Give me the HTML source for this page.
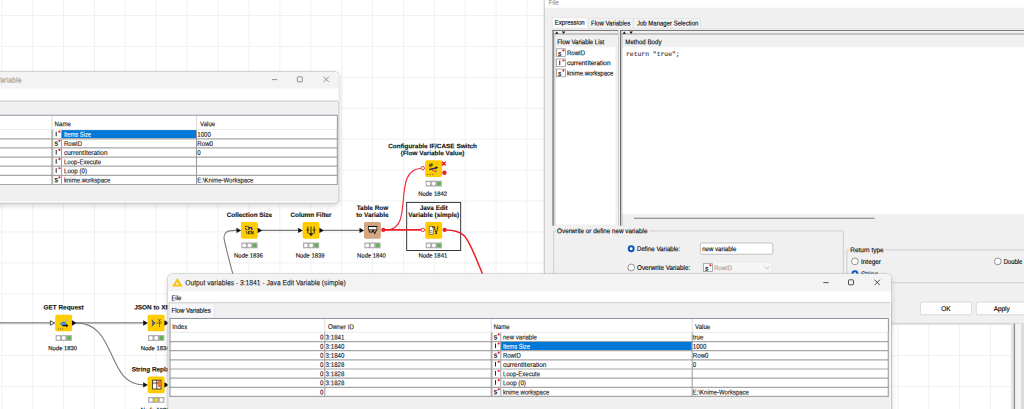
<!DOCTYPE html>
<html><head><meta charset="utf-8"><title>KNIME</title>
<style>html,body{margin:0;padding:0;background:#fff;overflow:hidden}svg{display:block;font-family:"Liberation Sans",sans-serif}</style>
</head><body>
<svg width="1024" height="409" viewBox="0 0 1024 409">
<defs>
<filter id="sh" x="-5%" y="-10%" width="110%" height="125%"><feGaussianBlur in="SourceAlpha" stdDeviation="2.5"/><feOffset dy="1.5"/><feComponentTransfer><feFuncA type="linear" slope="0.16"/></feComponentTransfer><feMerge><feMergeNode/><feMergeNode in="SourceGraphic"/></feMerge></filter>
<clipPath id="cw1"><rect x="-10" y="71.7" width="348.8" height="131.6" rx="4"/></clipPath>
<clipPath id="cw3"><rect x="167.9" y="273.9" width="723.4" height="150" rx="4"/></clipPath>
</defs>

<rect x="0.00" y="0.00" width="1024.00" height="409.00" fill="#fff"/>
<line x1="1.76" y1="0.00" x2="1.76" y2="409.00" stroke="#f1f1f1" stroke-width="1"/>
<line x1="32.66" y1="0.00" x2="32.66" y2="409.00" stroke="#f1f1f1" stroke-width="1"/>
<line x1="63.56" y1="0.00" x2="63.56" y2="409.00" stroke="#f1f1f1" stroke-width="1"/>
<line x1="94.46" y1="0.00" x2="94.46" y2="409.00" stroke="#f1f1f1" stroke-width="1"/>
<line x1="125.36" y1="0.00" x2="125.36" y2="409.00" stroke="#f1f1f1" stroke-width="1"/>
<line x1="156.26" y1="0.00" x2="156.26" y2="409.00" stroke="#f1f1f1" stroke-width="1"/>
<line x1="187.16" y1="0.00" x2="187.16" y2="409.00" stroke="#f1f1f1" stroke-width="1"/>
<line x1="218.06" y1="0.00" x2="218.06" y2="409.00" stroke="#f1f1f1" stroke-width="1"/>
<line x1="248.96" y1="0.00" x2="248.96" y2="409.00" stroke="#f1f1f1" stroke-width="1"/>
<line x1="279.86" y1="0.00" x2="279.86" y2="409.00" stroke="#f1f1f1" stroke-width="1"/>
<line x1="310.76" y1="0.00" x2="310.76" y2="409.00" stroke="#f1f1f1" stroke-width="1"/>
<line x1="341.66" y1="0.00" x2="341.66" y2="409.00" stroke="#f1f1f1" stroke-width="1"/>
<line x1="372.56" y1="0.00" x2="372.56" y2="409.00" stroke="#f1f1f1" stroke-width="1"/>
<line x1="403.46" y1="0.00" x2="403.46" y2="409.00" stroke="#f1f1f1" stroke-width="1"/>
<line x1="434.36" y1="0.00" x2="434.36" y2="409.00" stroke="#f1f1f1" stroke-width="1"/>
<line x1="465.26" y1="0.00" x2="465.26" y2="409.00" stroke="#f1f1f1" stroke-width="1"/>
<line x1="496.16" y1="0.00" x2="496.16" y2="409.00" stroke="#f1f1f1" stroke-width="1"/>
<line x1="527.06" y1="0.00" x2="527.06" y2="409.00" stroke="#f1f1f1" stroke-width="1"/>
<line x1="557.96" y1="0.00" x2="557.96" y2="409.00" stroke="#f1f1f1" stroke-width="1"/>
<line x1="588.86" y1="0.00" x2="588.86" y2="409.00" stroke="#f1f1f1" stroke-width="1"/>
<line x1="619.76" y1="0.00" x2="619.76" y2="409.00" stroke="#f1f1f1" stroke-width="1"/>
<line x1="650.66" y1="0.00" x2="650.66" y2="409.00" stroke="#f1f1f1" stroke-width="1"/>
<line x1="681.56" y1="0.00" x2="681.56" y2="409.00" stroke="#f1f1f1" stroke-width="1"/>
<line x1="712.46" y1="0.00" x2="712.46" y2="409.00" stroke="#f1f1f1" stroke-width="1"/>
<line x1="743.36" y1="0.00" x2="743.36" y2="409.00" stroke="#f1f1f1" stroke-width="1"/>
<line x1="774.26" y1="0.00" x2="774.26" y2="409.00" stroke="#f1f1f1" stroke-width="1"/>
<line x1="805.16" y1="0.00" x2="805.16" y2="409.00" stroke="#f1f1f1" stroke-width="1"/>
<line x1="836.06" y1="0.00" x2="836.06" y2="409.00" stroke="#f1f1f1" stroke-width="1"/>
<line x1="866.96" y1="0.00" x2="866.96" y2="409.00" stroke="#f1f1f1" stroke-width="1"/>
<line x1="897.86" y1="0.00" x2="897.86" y2="409.00" stroke="#f1f1f1" stroke-width="1"/>
<line x1="928.76" y1="0.00" x2="928.76" y2="409.00" stroke="#f1f1f1" stroke-width="1"/>
<line x1="959.66" y1="0.00" x2="959.66" y2="409.00" stroke="#f1f1f1" stroke-width="1"/>
<line x1="990.56" y1="0.00" x2="990.56" y2="409.00" stroke="#f1f1f1" stroke-width="1"/>
<line x1="1021.46" y1="0.00" x2="1021.46" y2="409.00" stroke="#f1f1f1" stroke-width="1"/>
<line x1="0.00" y1="15.50" x2="1024.00" y2="15.50" stroke="#f1f1f1" stroke-width="1"/>
<line x1="0.00" y1="46.42" x2="1024.00" y2="46.42" stroke="#f1f1f1" stroke-width="1"/>
<line x1="0.00" y1="77.34" x2="1024.00" y2="77.34" stroke="#f1f1f1" stroke-width="1"/>
<line x1="0.00" y1="108.26" x2="1024.00" y2="108.26" stroke="#f1f1f1" stroke-width="1"/>
<line x1="0.00" y1="139.18" x2="1024.00" y2="139.18" stroke="#f1f1f1" stroke-width="1"/>
<line x1="0.00" y1="170.10" x2="1024.00" y2="170.10" stroke="#f1f1f1" stroke-width="1"/>
<line x1="0.00" y1="201.02" x2="1024.00" y2="201.02" stroke="#f1f1f1" stroke-width="1"/>
<line x1="0.00" y1="231.94" x2="1024.00" y2="231.94" stroke="#f1f1f1" stroke-width="1"/>
<line x1="0.00" y1="262.86" x2="1024.00" y2="262.86" stroke="#f1f1f1" stroke-width="1"/>
<line x1="0.00" y1="293.78" x2="1024.00" y2="293.78" stroke="#f1f1f1" stroke-width="1"/>
<line x1="0.00" y1="324.70" x2="1024.00" y2="324.70" stroke="#f1f1f1" stroke-width="1"/>
<line x1="0.00" y1="355.62" x2="1024.00" y2="355.62" stroke="#f1f1f1" stroke-width="1"/>
<line x1="0.00" y1="386.54" x2="1024.00" y2="386.54" stroke="#f1f1f1" stroke-width="1"/>
<line x1="0.00" y1="417.46" x2="1024.00" y2="417.46" stroke="#f1f1f1" stroke-width="1"/>
<line x1="0.00" y1="322.90" x2="50.00" y2="322.90" stroke="#7c7c7c" stroke-width="1.1"/>
<line x1="76.00" y1="322.90" x2="143.50" y2="322.90" stroke="#7c7c7c" stroke-width="1.1"/>
<path d="M76,322.9 C117.8,322.9 105.7,384.9 143.5,384.9" stroke="#7c7c7c" stroke-width="1.1" fill="none"/>
<path d="M237,230.4 C226,230 222.5,233 224.5,241 C227,252 230,264 233.5,276" stroke="#7c7c7c" stroke-width="1.1" fill="none"/>
<line x1="262.00" y1="230.40" x2="298.00" y2="230.40" stroke="#7c7c7c" stroke-width="1.1"/>
<line x1="323.50" y1="230.40" x2="360.00" y2="230.40" stroke="#7c7c7c" stroke-width="1.1"/>
<rect x="406.70" y="202.40" width="54.00" height="48.10" fill="#fff" stroke="#222" stroke-width="0.9"/>
<line x1="383.40" y1="229.95" x2="422.80" y2="229.95" stroke="#ec2027" stroke-width="1.7"/>
<path d="M383.4,229.9 H386.7 C415.8,229.9 390.1,168.2 422.5,168.2" stroke="#ec2027" stroke-width="1.1" fill="none"/>
<path d="M444.7,229.95 C469,229.95 466.8,238.1 486.7,283.7" stroke="#ec2027" stroke-width="1.5" fill="none"/>
<rect x="55.20" y="314.65" width="16.90" height="16.70" fill="#ffcc00" rx="1.7"/>
<text transform="translate(63.65,309.59) matrix(0.9850 0.0005 0 1 0 0)" font-size="6.5" fill="#111" font-weight="bold" text-anchor="middle" stroke="#111" stroke-width="0.12">GET Request</text>
<rect x="55.65" y="335.10" width="16.20" height="5.80" fill="#ababab"/>
<circle cx="58.45" cy="338.00" r="1.9" fill="#fff"/>
<circle cx="63.70" cy="338.00" r="1.9" fill="#fff"/>
<circle cx="68.95" cy="338.00" r="1.9" fill="#55b848"/>
<text transform="translate(62.75,350.20) matrix(0.9650 0.0005 0 1 0 0)" font-size="6.1" fill="#111" text-anchor="middle" stroke="#111" stroke-width="0.15">Node 1830</text>
<path d="M71.95,320.30 L76.65,323.00 L71.95,325.70 Z" fill="#111"/>
<path d="M50.35,320.80 L54.65,323.00 L50.35,325.20 Z" fill="#fff" stroke="#222" stroke-width="0.8"/>
<path d="M60.3,325.2 q-0.6,-2.4 1.8,-2.9 q1.2,-1.6 2.8,-0.5 q1.6,0.2 1.3,2 q0.6,1 -0.8,1.4 z" fill="#3d8fe0"/><path d="M62.4,325.6 h4.4" stroke="#0b0b1a" stroke-width="1.3" fill="none"/><path d="M66.1,323.7 l2.3,1.9 l-2.3,1.9 z" fill="#0b0b1a"/><path d="M66.5,318.9 l1.3,1.3 l-1.3,1.3 l-1.3,-1.3 z" fill="#9fbfa0"/>
<rect x="57.90" y="328.50" width="0.90" height="0.90" fill="#3a3a2a"/>
<rect x="60.00" y="328.50" width="0.90" height="0.90" fill="#3a3a2a"/>
<rect x="62.10" y="328.50" width="0.90" height="0.90" fill="#3a3a2a"/>
<rect x="147.65" y="314.65" width="16.90" height="16.70" fill="#ffcc00" rx="1.7"/>
<text transform="translate(154.50,309.59) matrix(0.9850 0.0005 0 1 0 0)" font-size="6.5" fill="#111" font-weight="bold" text-anchor="middle" stroke="#111" stroke-width="0.12">JSON to XML</text>
<rect x="148.10" y="335.10" width="16.20" height="5.80" fill="#ababab"/>
<circle cx="150.90" cy="338.00" r="1.9" fill="#fff"/>
<circle cx="156.15" cy="338.00" r="1.9" fill="#fff"/>
<circle cx="161.40" cy="338.00" r="1.9" fill="#55b848"/>
<text transform="translate(155.20,350.20) matrix(0.9650 0.0005 0 1 0 0)" font-size="6.1" fill="#111" text-anchor="middle" stroke="#111" stroke-width="0.15">Node 1834</text>
<path d="M143.20,320.30 L147.90,323.00 L143.20,325.70 Z" fill="#111"/>
<path d="M164.40,320.30 L169.10,323.00 L164.40,325.70 Z" fill="#111"/>
<path d="M151.9,319.9 l3.4,3.2 l-3.4,3.2 q1.6,-3.2 0,-6.4 z" fill="#4c5b80" stroke="#3a4666" stroke-width="0.5"/><path d="M158.5,319.3 l2,2.2 m0,-2.2 l-2,2.2" stroke="#222" stroke-width="0.8"/><path d="M159.5,321.8 v5.4" stroke="#222" stroke-width="0.9" stroke-dasharray="1.1 0.8"/><path d="M156.6,323 h5" stroke="#222" stroke-width="0.9" stroke-dasharray="1.1 0.8"/>
<rect x="147.65" y="376.55" width="16.90" height="16.70" fill="#ffcc00" rx="1.7"/>
<text transform="translate(155.30,371.49) matrix(0.9850 0.0005 0 1 0 0)" font-size="6.5" fill="#111" font-weight="bold" text-anchor="middle" stroke="#111" stroke-width="0.12">String Replacer</text>
<rect x="148.10" y="397.00" width="16.20" height="5.80" fill="#ababab"/>
<circle cx="150.90" cy="399.90" r="1.9" fill="#fff"/>
<circle cx="156.15" cy="399.90" r="1.9" fill="#f4d800"/>
<circle cx="161.40" cy="399.90" r="1.9" fill="#fff"/>
<text transform="translate(155.20,412.10) matrix(0.9650 0.0005 0 1 0 0)" font-size="6.1" fill="#111" text-anchor="middle" stroke="#111" stroke-width="0.15">Node 1931</text>
<path d="M143.20,382.20 L147.90,384.90 L143.20,387.60 Z" fill="#111"/>
<path d="M164.40,382.20 L169.10,384.90 L164.40,387.60 Z" fill="#111"/>
<rect x="152.60" y="380.20" width="8.40" height="8.80" fill="#fff" stroke="#222" stroke-width="0.8"/>
<line x1="156.80" y1="380.20" x2="156.80" y2="389.00" stroke="#222" stroke-width="0.8"/>
<line x1="152.60" y1="383.00" x2="161.00" y2="383.00" stroke="#222" stroke-width="0.8"/>
<rect x="158.00" y="381.00" width="3.00" height="6.00" fill="#e8762b"/>
<rect x="240.95" y="222.05" width="16.90" height="16.70" fill="#ffcc00" rx="1.7"/>
<text transform="translate(249.40,216.99) matrix(0.9850 0.0005 0 1 0 0)" font-size="6.5" fill="#111" font-weight="bold" text-anchor="middle" stroke="#111" stroke-width="0.12">Collection Size</text>
<rect x="241.40" y="242.50" width="16.20" height="5.80" fill="#ababab"/>
<circle cx="244.20" cy="245.40" r="1.9" fill="#fff"/>
<circle cx="249.45" cy="245.40" r="1.9" fill="#fff"/>
<circle cx="254.70" cy="245.40" r="1.9" fill="#55b848"/>
<text transform="translate(248.50,257.60) matrix(0.9650 0.0005 0 1 0 0)" font-size="6.1" fill="#111" text-anchor="middle" stroke="#111" stroke-width="0.15">Node 1836</text>
<path d="M236.50,227.70 L241.20,230.40 L236.50,233.10 Z" fill="#111"/>
<path d="M257.70,227.70 L262.40,230.40 L257.70,233.10 Z" fill="#111"/>
<rect x="245.6" y="226.4" width="2.9" height="3.1" fill="none" stroke="#111" stroke-width="0.9" stroke-dasharray="1.2 0.7"/><path d="M249.4,229.6 v-2 h2.2 v1.6 h1.3" stroke="#1c1cf0" stroke-width="1.1" fill="none"/><path d="M246.6,231 q-0.9,0.8 0,1.5 q0.9,0.8 0,1.6 M248.4,230.8 v3.4 M248.5,232.6 l1.4,-1.7 M248.5,232.4 l1.5,1.8 M251,234.2 v-3.4 l2,3.4 v-3.4" stroke="#111" stroke-width="0.75" fill="none"/>
<rect x="302.55" y="222.05" width="16.90" height="16.70" fill="#ffcc00" rx="1.7"/>
<text transform="translate(311.00,216.99) matrix(0.9850 0.0005 0 1 0 0)" font-size="6.5" fill="#111" font-weight="bold" text-anchor="middle" stroke="#111" stroke-width="0.12">Column Filter</text>
<rect x="303.00" y="242.50" width="16.20" height="5.80" fill="#ababab"/>
<circle cx="305.80" cy="245.40" r="1.9" fill="#fff"/>
<circle cx="311.05" cy="245.40" r="1.9" fill="#fff"/>
<circle cx="316.30" cy="245.40" r="1.9" fill="#55b848"/>
<text transform="translate(310.10,257.60) matrix(0.9650 0.0005 0 1 0 0)" font-size="6.1" fill="#111" text-anchor="middle" stroke="#111" stroke-width="0.15">Node 1839</text>
<path d="M298.10,227.70 L302.80,230.40 L298.10,233.10 Z" fill="#111"/>
<path d="M319.30,227.70 L324.00,230.40 L319.30,233.10 Z" fill="#111"/>
<path d="M307.8,226.5 v7 M311,226.5 v9 M314.2,226.5 v7 M306.3,230 h3 M312.7,230 h3 M309.2,233.5 l1.8,2.2 l1.8,-2.2 z" stroke="#222" stroke-width="0.9" fill="#222"/>
<rect x="363.95" y="222.05" width="16.90" height="16.70" fill="#d3a580" rx="1.7"/>
<text transform="translate(372.40,209.99) matrix(0.9850 0.0005 0 1 0 0)" font-size="6.5" fill="#111" font-weight="bold" text-anchor="middle" stroke="#111" stroke-width="0.12">Table Row</text>
<text transform="translate(372.40,216.99) matrix(0.9850 0.0005 0 1 0 0)" font-size="6.5" fill="#111" font-weight="bold" text-anchor="middle" stroke="#111" stroke-width="0.12">to Variable</text>
<rect x="364.40" y="242.50" width="16.20" height="5.80" fill="#ababab"/>
<circle cx="367.20" cy="245.40" r="1.9" fill="#fff"/>
<circle cx="372.45" cy="245.40" r="1.9" fill="#fff"/>
<circle cx="377.70" cy="245.40" r="1.9" fill="#55b848"/>
<text transform="translate(371.50,257.60) matrix(0.9650 0.0005 0 1 0 0)" font-size="6.1" fill="#111" text-anchor="middle" stroke="#111" stroke-width="0.15">Node 1840</text>
<path d="M359.50,227.70 L364.20,230.40 L359.50,233.10 Z" fill="#111"/>
<circle cx="383.30" cy="229.95" r="2.15" fill="#ec2027"/>
<rect x="368.40" y="226.60" width="8.50" height="3.20" fill="#fff" stroke="#111" stroke-width="0.7"/>
<line x1="368.10" y1="226.50" x2="377.20" y2="226.50" stroke="#111" stroke-width="1.1"/>
<path d="M369.3,229.9 v2.2 h3.2 v-2.2" stroke="#111" stroke-width="0.9" fill="none"/><path d="M372.9,229.8 l1.8,4 l1.9,-4" stroke="#111" stroke-width="1.0" fill="none"/>
<rect x="425.25" y="222.05" width="16.90" height="16.70" fill="#ffcc00" rx="1.7"/>
<text transform="translate(433.70,209.99) matrix(0.9850 0.0005 0 1 0 0)" font-size="6.5" fill="#111" font-weight="bold" text-anchor="middle" stroke="#111" stroke-width="0.12">Java Edit</text>
<text transform="translate(433.70,216.99) matrix(0.9850 0.0005 0 1 0 0)" font-size="6.5" fill="#111" font-weight="bold" text-anchor="middle" stroke="#111" stroke-width="0.12">Variable (simple)</text>
<rect x="425.70" y="242.50" width="16.20" height="5.80" fill="#ababab"/>
<circle cx="428.50" cy="245.40" r="1.9" fill="#fff"/>
<circle cx="433.75" cy="245.40" r="1.9" fill="#fff"/>
<circle cx="439.00" cy="245.40" r="1.9" fill="#55b848"/>
<text transform="translate(432.80,257.60) matrix(0.9650 0.0005 0 1 0 0)" font-size="6.1" fill="#111" text-anchor="middle" stroke="#111" stroke-width="0.15">Node 1841</text>
<circle cx="422.80" cy="229.95" r="1.75" fill="#fff" stroke="#ec2027" stroke-width="0.9"/>
<circle cx="444.60" cy="229.95" r="2.15" fill="#ec2027"/>
<path d="M429.3,226.3 h2.6 l1.3,1.4 v6.6 h-3.9 z" fill="#fff" stroke="#111" stroke-width="0.5"/><path d="M431.6,226.2 h1.8 v2 z" fill="#111"/><path d="M430.2,230.6 h1.6 M430.2,232.3 h1.6" stroke="#445" stroke-width="0.7"/><path d="M434.2,226.4 l1.9,7.8 l1.9,-7.8" stroke="#111" stroke-width="1.0" fill="none" stroke-dasharray="1.6 0.5"/>
<rect x="425.15" y="160.25" width="16.90" height="16.70" fill="#ffcc00" rx="1.7"/>
<text transform="translate(432.60,148.19) matrix(0.9850 0.0005 0 1 0 0)" font-size="6.5" fill="#111" font-weight="bold" text-anchor="middle" stroke="#111" stroke-width="0.12">Configurable IF/CASE Switch</text>
<text transform="translate(432.60,155.19) matrix(0.9850 0.0005 0 1 0 0)" font-size="6.5" fill="#111" font-weight="bold" text-anchor="middle" stroke="#111" stroke-width="0.12">(Flow Variable Value)</text>
<rect x="425.60" y="180.70" width="16.20" height="5.80" fill="#ababab"/>
<circle cx="428.40" cy="183.60" r="1.9" fill="#fff"/>
<circle cx="433.65" cy="183.60" r="1.9" fill="#fff"/>
<circle cx="438.90" cy="183.60" r="1.9" fill="#55b848"/>
<text transform="translate(432.70,195.80) matrix(0.9650 0.0005 0 1 0 0)" font-size="6.1" fill="#111" text-anchor="middle" stroke="#111" stroke-width="0.15">Node 1842</text>
<circle cx="422.70" cy="168.15" r="1.75" fill="#fff" stroke="#ec2027" stroke-width="0.9"/>
<circle cx="444.4" cy="172.8" r="2.2" fill="#ec2027"/><path d="M441.9,161.7 l3.8,3.8 m0,-3.8 l-3.8,3.8" stroke="#ec2027" stroke-width="1.5"/><rect x="442.6" y="162.4" width="2.4" height="2.4" fill="#ec2027" opacity="0.55"/>
<text transform="translate(429.1,167.3) matrix(0.8 0.0005 0 1 0 0)" font-size="5" font-weight="bold" fill="#111" stroke="#111" stroke-width="0.2">IF</text>
<path d="M429.3,169.6 L436,167.8" stroke="#111" stroke-width="1.1" fill="none"/><path d="M435.6,166.2 l2.6,1.3 l-2.3,1.8 z" fill="#111"/><path d="M431.8,168.9 L436.2,168.6" stroke="#2626d8" stroke-width="0.9"/><path d="M432,170 L435.4,171.4" stroke="#c03030" stroke-width="0.8"/><path d="M435.3,170 l2.2,1.5 l-2.2,1.5 z" fill="#8488a8"/>
<rect x="427.00" y="174.10" width="0.90" height="0.90" fill="#3a3a2a"/>
<rect x="429.65" y="174.10" width="0.90" height="0.90" fill="#3a3a2a"/>
<rect x="432.30" y="174.10" width="0.90" height="0.90" fill="#3a3a2a"/>
<g filter="url(#sh)"><rect x="-10" y="71.7" width="348.8" height="131.6" rx="4" fill="#fafafa" stroke="#bfc2c8" stroke-width="0.9"/></g>
<rect x="-10.00" y="101.00" width="347.90" height="100.40" fill="#f0f0f0"/>
<g clip-path="url(#cw1)">
<rect x="-10.00" y="71.70" width="350.00" height="16.90" fill="#f3f3f3"/>
<rect x="-10.00" y="88.60" width="350.00" height="12.40" fill="#fff"/>
<line x1="-10.00" y1="101.00" x2="337.90" y2="101.00" stroke="#bdbdbd" stroke-width="0.8"/>
<text transform="translate(-4.00,82.54) matrix(0.9300 0.0005 0 1 0 0)" font-size="7.6" fill="#9a9a9a" text-anchor="start" stroke="#9a9a9a" stroke-width="0.12">Variable</text>
<line x1="271.90" y1="79.60" x2="277.10" y2="79.60" stroke="#777" stroke-width="0.8"/>
<rect x="297.30" y="76.80" width="5.00" height="5.00" fill="none" stroke="#777" stroke-width="0.8" rx="0.8"/>
<path d="M323.5,76.7 l5.4,5.4 m0,-5.4 l-5.4,5.4" stroke="#777" stroke-width="0.8" fill="none"/>
<rect x="-10.00" y="115.30" width="347.60" height="69.28" fill="#fff"/>
<line x1="51.90" y1="115.30" x2="51.90" y2="129.80" stroke="#dcdcdc" stroke-width="1"/>
<line x1="196.50" y1="115.30" x2="196.50" y2="129.80" stroke="#dcdcdc" stroke-width="1"/>
<line x1="-10.00" y1="129.60" x2="337.60" y2="129.60" stroke="#e4e4e4" stroke-width="0.8"/>
<text transform="translate(54.60,126.17) matrix(0.8770 0.0005 0 1 0 0)" font-size="7.0" fill="#111" text-anchor="start" stroke="#111" stroke-width="0.12">Name</text>
<text transform="translate(200.00,126.17) matrix(0.8770 0.0005 0 1 0 0)" font-size="7.0" fill="#111" text-anchor="start" stroke="#111" stroke-width="0.12">Value</text>
<rect x="62.00" y="130.10" width="134.00" height="8.23" fill="#0078d7"/>
<line x1="61.50" y1="129.81" x2="61.50" y2="138.22" stroke="#959595" stroke-width="0.9"/>
<line x1="52.80" y1="129.81" x2="52.80" y2="138.22" stroke="#a5a5a5" stroke-width="0.8"/>
<rect x="55.70" y="131.71" width="0.95" height="4.60" fill="#1a1a1a"/>
<circle cx="59.40" cy="131.71" r="1.1" fill="#ee1c25"/>
<text transform="translate(64.00,136.84) matrix(0.8294 0.0005 0 1 0 0)" font-size="7.0" fill="#fff" text-anchor="start" stroke="#fff" stroke-width="0.12">Items Size</text>
<text transform="translate(197.30,136.84) matrix(0.8770 0.0005 0 1 0 0)" font-size="7.0" fill="#111" text-anchor="start" stroke="#111" stroke-width="0.12">1000</text>
<line x1="-10.00" y1="138.83" x2="337.60" y2="138.83" stroke="#a6a6a6" stroke-width="1.2"/>
<line x1="61.50" y1="138.94" x2="61.50" y2="147.34" stroke="#959595" stroke-width="0.9"/>
<line x1="52.80" y1="138.94" x2="52.80" y2="147.34" stroke="#a5a5a5" stroke-width="0.8"/>
<text transform="translate(54.50,145.82) matrix(0.9000 0.0005 0 1 0 0)" font-size="8.0" fill="#151515" text-anchor="start" stroke="#151515" stroke-width="0.2">s</text>
<circle cx="59.40" cy="140.84" r="1.1" fill="#ee1c25"/>
<text transform="translate(64.00,145.97) matrix(0.8570 0.0005 0 1 0 0)" font-size="7.0" fill="#111" text-anchor="start" stroke="#111" stroke-width="0.12">RowID</text>
<text transform="translate(197.30,145.97) matrix(0.8770 0.0005 0 1 0 0)" font-size="7.0" fill="#111" text-anchor="start" stroke="#111" stroke-width="0.12">Row0</text>
<line x1="-10.00" y1="147.96" x2="337.60" y2="147.96" stroke="#a6a6a6" stroke-width="1.2"/>
<line x1="61.50" y1="148.07" x2="61.50" y2="156.47" stroke="#959595" stroke-width="0.9"/>
<line x1="52.80" y1="148.07" x2="52.80" y2="156.47" stroke="#a5a5a5" stroke-width="0.8"/>
<rect x="55.70" y="149.97" width="0.95" height="4.60" fill="#1a1a1a"/>
<circle cx="59.40" cy="149.97" r="1.1" fill="#ee1c25"/>
<text transform="translate(64.00,155.09) matrix(0.9262 0.0005 0 1 0 0)" font-size="7.0" fill="#111" text-anchor="start" stroke="#111" stroke-width="0.12">currentIteration</text>
<text transform="translate(197.30,155.09) matrix(0.8770 0.0005 0 1 0 0)" font-size="7.0" fill="#111" text-anchor="start" stroke="#111" stroke-width="0.12">0</text>
<line x1="-10.00" y1="157.09" x2="337.60" y2="157.09" stroke="#a6a6a6" stroke-width="1.2"/>
<line x1="61.50" y1="157.20" x2="61.50" y2="165.60" stroke="#959595" stroke-width="0.9"/>
<line x1="52.80" y1="157.20" x2="52.80" y2="165.60" stroke="#a5a5a5" stroke-width="0.8"/>
<rect x="55.70" y="159.10" width="0.95" height="4.60" fill="#1a1a1a"/>
<circle cx="59.40" cy="159.10" r="1.1" fill="#ee1c25"/>
<text transform="translate(64.00,164.22) matrix(0.8612 0.0005 0 1 0 0)" font-size="7.0" fill="#111" text-anchor="start" stroke="#111" stroke-width="0.12">Loop-Execute</text>
<text transform="translate(197.30,164.22) matrix(1.0000 0.0005 0 1 0 0)" font-size="7.0" fill="#111" text-anchor="start" stroke="#111" stroke-width="0.12"></text>
<line x1="-10.00" y1="166.22" x2="337.60" y2="166.22" stroke="#a6a6a6" stroke-width="1.2"/>
<line x1="61.50" y1="166.33" x2="61.50" y2="174.74" stroke="#959595" stroke-width="0.9"/>
<line x1="52.80" y1="166.33" x2="52.80" y2="174.74" stroke="#a5a5a5" stroke-width="0.8"/>
<rect x="55.70" y="168.23" width="0.95" height="4.60" fill="#1a1a1a"/>
<circle cx="59.40" cy="168.23" r="1.1" fill="#ee1c25"/>
<text transform="translate(64.00,173.36) matrix(0.8823 0.0005 0 1 0 0)" font-size="7.0" fill="#111" text-anchor="start" stroke="#111" stroke-width="0.12">Loop (0)</text>
<text transform="translate(197.30,173.36) matrix(1.0000 0.0005 0 1 0 0)" font-size="7.0" fill="#111" text-anchor="start" stroke="#111" stroke-width="0.12"></text>
<line x1="-10.00" y1="175.35" x2="337.60" y2="175.35" stroke="#a6a6a6" stroke-width="1.2"/>
<line x1="61.50" y1="175.46" x2="61.50" y2="183.87" stroke="#959595" stroke-width="0.9"/>
<line x1="52.80" y1="175.46" x2="52.80" y2="183.87" stroke="#a5a5a5" stroke-width="0.8"/>
<text transform="translate(54.50,182.34) matrix(0.9000 0.0005 0 1 0 0)" font-size="8.0" fill="#151515" text-anchor="start" stroke="#151515" stroke-width="0.2">s</text>
<circle cx="59.40" cy="177.36" r="1.1" fill="#ee1c25"/>
<text transform="translate(64.00,182.49) matrix(0.8581 0.0005 0 1 0 0)" font-size="7.0" fill="#111" text-anchor="start" stroke="#111" stroke-width="0.12">knime.workspace</text>
<text transform="translate(197.30,182.49) matrix(0.8566 0.0005 0 1 0 0)" font-size="7.0" fill="#111" text-anchor="start" stroke="#111" stroke-width="0.12">E:\Knime-Workspace</text>
<line x1="-10.00" y1="184.48" x2="337.60" y2="184.48" stroke="#a6a6a6" stroke-width="1.2"/>
<line x1="51.90" y1="129.80" x2="51.90" y2="184.58" stroke="#9a9a9a" stroke-width="1.0"/>
<line x1="196.50" y1="129.80" x2="196.50" y2="184.58" stroke="#9a9a9a" stroke-width="1.0"/>
<line x1="337.30" y1="129.80" x2="337.30" y2="184.58" stroke="#a6a6a6" stroke-width="1.2"/>
<line x1="-10.00" y1="115.30" x2="337.60" y2="115.30" stroke="#8f95a3" stroke-width="1.1"/>
<line x1="337.40" y1="115.30" x2="337.40" y2="129.80" stroke="#8f95a3" stroke-width="1.0"/>
</g>
<rect x="542.6" y="-8" width="492" height="333.2" fill="#000" opacity="0.035"/><rect x="543.5" y="-8" width="491" height="332.2" fill="#000" opacity="0.05"/><rect x="544.4" y="-8" width="490" height="331.2" fill="#f0f0f0" stroke="#c2c2c2" stroke-width="0.7"/>
<rect x="544.80" y="-8.00" width="480.00" height="15.70" fill="#fff"/>
<text transform="translate(548.80,4.82) matrix(0.8770 0.0005 0 1 0 0)" font-size="7.0" fill="#8a8a8a" text-anchor="start" stroke="#8a8a8a" stroke-width="0.12">File</text>
<rect x="588.50" y="18.60" width="44.40" height="10.00" fill="#f3f3f3" stroke="#e2e2e2" stroke-width="0.7"/>
<rect x="633.60" y="18.60" width="67.00" height="10.00" fill="#f3f3f3" stroke="#e2e2e2" stroke-width="0.7"/>
<rect x="552.10" y="17.30" width="35.90" height="11.50" fill="#fbfbfb" stroke="#dedede" stroke-width="0.7"/>
<text transform="translate(554.80,24.72) matrix(0.8635 0.0005 0 1 0 0)" font-size="7.0" fill="#000" text-anchor="start" stroke="#000" stroke-width="0.12">Expression</text>
<text transform="translate(591.00,25.42) matrix(0.8659 0.0005 0 1 0 0)" font-size="7.0" fill="#000" text-anchor="start" stroke="#000" stroke-width="0.12">Flow Variables</text>
<text transform="translate(637.00,25.42) matrix(0.8576 0.0005 0 1 0 0)" font-size="7.0" fill="#000" text-anchor="start" stroke="#000" stroke-width="0.12">Job Manager Selection</text>
<line x1="552.00" y1="28.80" x2="1024.00" y2="28.80" stroke="#e3e3e3" stroke-width="0.8"/>
<rect x="552.50" y="30.00" width="65.90" height="195.80" fill="#f0f0f0"/>
<line x1="552.50" y1="30.50" x2="618.40" y2="30.50" stroke="#7a7a7a" stroke-width="1"/>
<line x1="552.50" y1="34.00" x2="618.40" y2="34.00" stroke="#b6b6b6" stroke-width="1.7"/>
<line x1="553.10" y1="30.00" x2="553.10" y2="225.80" stroke="#6e6e6e" stroke-width="1.3"/>
<line x1="554.80" y1="33.00" x2="554.80" y2="225.80" stroke="#c4c4c4" stroke-width="0.8"/>
<path d="M555.10,33.80 l1.7,-2.4 l1.7,2.4 z M561.90,31.60 l1.7,2.4 l1.7,-2.4 z" fill="#111"/>
<rect x="620.00" y="30.00" width="410.00" height="195.80" fill="#f0f0f0"/>
<line x1="620.00" y1="30.50" x2="1030.00" y2="30.50" stroke="#7a7a7a" stroke-width="1"/>
<line x1="620.00" y1="34.00" x2="1030.00" y2="34.00" stroke="#b6b6b6" stroke-width="1.7"/>
<line x1="620.60" y1="30.00" x2="620.60" y2="225.80" stroke="#6e6e6e" stroke-width="1.3"/>
<line x1="622.30" y1="33.00" x2="622.30" y2="225.80" stroke="#c4c4c4" stroke-width="0.8"/>
<path d="M622.60,33.80 l1.7,-2.4 l1.7,2.4 z M629.40,31.60 l1.7,2.4 l1.7,-2.4 z" fill="#111"/>
<rect x="618.40" y="29.50" width="1.60" height="196.30" fill="#f0f0f0"/>
<line x1="618.50" y1="30.00" x2="618.50" y2="225.80" stroke="#c6c6c6" stroke-width="0.8"/>
<rect x="556.00" y="47.20" width="59.50" height="177.20" fill="#fff"/>
<rect x="622.60" y="47.20" width="402.00" height="166.80" fill="#fff"/>
<text transform="translate(557.20,44.32) matrix(0.8607 0.0005 0 1 0 0)" font-size="7.0" fill="#000" text-anchor="start" stroke="#000" stroke-width="0.12">Flow Variable List</text>
<text transform="translate(625.30,44.32) matrix(0.8777 0.0005 0 1 0 0)" font-size="7.0" fill="#000" text-anchor="start" stroke="#000" stroke-width="0.12">Method Body</text>
<rect x="556.60" y="48.80" width="9.00" height="7.80" fill="#fff" stroke="#8a8a8a" stroke-width="0.7"/>
<text transform="translate(558.10,55.89) matrix(0.9167 0.0005 0 1 0 0)" font-size="7.2" fill="#151515" text-anchor="start" stroke="#151515" stroke-width="0.2">s</text>
<circle cx="563.40" cy="50.40" r="1.1" fill="#ee1c25"/>
<text transform="translate(567.00,55.22) matrix(0.8570 0.0005 0 1 0 0)" font-size="7.0" fill="#000" text-anchor="start" stroke="#000" stroke-width="0.12">RowID</text>
<rect x="556.60" y="58.90" width="9.00" height="7.80" fill="#fff" stroke="#8a8a8a" stroke-width="0.7"/>
<rect x="559.30" y="60.50" width="0.95" height="4.60" fill="#1a1a1a"/>
<circle cx="563.40" cy="60.50" r="1.1" fill="#ee1c25"/>
<text transform="translate(567.00,65.32) matrix(0.9262 0.0005 0 1 0 0)" font-size="7.0" fill="#000" text-anchor="start" stroke="#000" stroke-width="0.12">currentIteration</text>
<rect x="556.60" y="69.00" width="9.00" height="7.80" fill="#fff" stroke="#8a8a8a" stroke-width="0.7"/>
<text transform="translate(558.10,76.09) matrix(0.9167 0.0005 0 1 0 0)" font-size="7.2" fill="#151515" text-anchor="start" stroke="#151515" stroke-width="0.2">s</text>
<circle cx="563.40" cy="70.60" r="1.1" fill="#ee1c25"/>
<text transform="translate(567.00,75.42) matrix(0.8581 0.0005 0 1 0 0)" font-size="7.0" fill="#000" text-anchor="start" stroke="#000" stroke-width="0.12">knime.workspace</text>
<text transform="translate(626.00,56.10) matrix(1.0000 0.0005 0 1 0 0)" font-size="6.4" fill="#333" font-family="Liberation Mono, monospace" text-anchor="start" stroke="#333" stroke-width="0.12">return "true";</text>
<line x1="634.00" y1="218.30" x2="874.60" y2="218.30" stroke="#7c7c7c" stroke-width="1.1"/>
<rect x="553.70" y="230.90" width="289.60" height="69.10" fill="none" stroke="#c4c4c4" stroke-width="0.8" rx="1"/>
<rect x="556.10" y="227.90" width="93.00" height="6.00" fill="#f0f0f0"/>
<text transform="translate(557.10,233.22) matrix(0.9006 0.0005 0 1 0 0)" font-size="7.0" fill="#000" text-anchor="start" stroke="#000" stroke-width="0.12">Overwrite or define new variable</text>
<circle cx="631.2" cy="248.7" r="2.45" fill="#fff" stroke="#0a56b8" stroke-width="2.0"/>
<text transform="translate(637.00,251.12) matrix(0.8786 0.0005 0 1 0 0)" font-size="7.0" fill="#000" text-anchor="start" stroke="#000" stroke-width="0.12">Define Variable:</text>
<circle cx="631.2" cy="267.5" r="3.4" fill="#fbfbfb" stroke="#6a6a6a" stroke-width="0.7"/>
<text transform="translate(637.00,269.92) matrix(0.9017 0.0005 0 1 0 0)" font-size="7.0" fill="#000" text-anchor="start" stroke="#000" stroke-width="0.12">Overwrite Variable:</text>
<rect x="700.30" y="243.00" width="72.50" height="11.20" fill="#fff" stroke="#b4b4b4" stroke-width="0.8" rx="1.2"/>
<text transform="translate(702.20,251.32) matrix(0.8677 0.0005 0 1 0 0)" font-size="7.0" fill="#000" text-anchor="start" stroke="#000" stroke-width="0.12">new variable</text>
<rect x="702.00" y="262.00" width="70.00" height="11.50" fill="#f6f6f6" stroke="#e3e3e3" stroke-width="0.6"/>
<rect x="703.60" y="263.70" width="9.00" height="7.80" fill="#fff" stroke="#8a8a8a" stroke-width="0.7"/>
<text transform="translate(705.10,270.79) matrix(0.9167 0.0005 0 1 0 0)" font-size="7.2" fill="#151515" text-anchor="start" stroke="#151515" stroke-width="0.2">s</text>
<circle cx="710.40" cy="265.30" r="1.1" fill="#ee1c25"/>
<text transform="translate(714.00,270.32) matrix(0.8570 0.0005 0 1 0 0)" font-size="7.0" fill="#9b9b9b" text-anchor="start" stroke="#9b9b9b" stroke-width="0.12">RowID</text>
<path d="M764.5,266.6 l2.4,2.4 l2.4,-2.4" stroke="#aaa" stroke-width="0.7" fill="none"/>
<rect x="846.90" y="249.90" width="185.10" height="32.80" fill="none" stroke="#c4c4c4" stroke-width="0.8" rx="1"/>
<rect x="849.30" y="246.90" width="35.90" height="6.00" fill="#f0f0f0"/>
<text transform="translate(850.30,252.22) matrix(0.9203 0.0005 0 1 0 0)" font-size="7.0" fill="#000" text-anchor="start" stroke="#000" stroke-width="0.12">Return type</text>
<circle cx="854.9" cy="261.4" r="3.4" fill="#fbfbfb" stroke="#6a6a6a" stroke-width="0.7"/>
<text transform="translate(861.00,263.92) matrix(0.9178 0.0005 0 1 0 0)" font-size="7.0" fill="#000" text-anchor="start" stroke="#000" stroke-width="0.12">Integer</text>
<circle cx="997.8" cy="261.4" r="3.4" fill="#fbfbfb" stroke="#6a6a6a" stroke-width="0.7"/>
<text transform="translate(1003.70,263.92) matrix(0.8385 0.0005 0 1 0 0)" font-size="7.0" fill="#000" text-anchor="start" stroke="#000" stroke-width="0.12">Double</text>
<circle cx="854.9" cy="273.8" r="2.45" fill="#fff" stroke="#0a56b8" stroke-width="2.0"/>
<text transform="translate(861.00,276.32) matrix(0.9297 0.0005 0 1 0 0)" font-size="7.0" fill="#000" text-anchor="start" stroke="#000" stroke-width="0.12">String</text>
<rect x="920.40" y="302.00" width="51.20" height="12.80" fill="#fdfdfd" stroke="#d2d2d2" stroke-width="0.8" rx="2"/>
<text transform="translate(946.00,310.95) matrix(0.9500 0.0005 0 1 0 0)" font-size="6.8" fill="#000" text-anchor="middle" stroke="#000" stroke-width="0.12">OK</text>
<rect x="976.20" y="302.00" width="51.20" height="12.80" fill="#fdfdfd" stroke="#d2d2d2" stroke-width="0.8" rx="2"/>
<text transform="translate(1001.70,310.95) matrix(0.9500 0.0005 0 1 0 0)" font-size="6.8" fill="#000" text-anchor="middle" stroke="#000" stroke-width="0.12">Apply</text>
<rect x="1011.00" y="323.60" width="13.00" height="86.00" fill="#f3f3f3"/>
<rect x="1011.00" y="323.60" width="2.80" height="86.00" fill="#e6e6e6"/>
<line x1="1014.40" y1="323.60" x2="1014.40" y2="409.00" stroke="#8c8c8c" stroke-width="1.3"/>
<rect x="1021.10" y="323.60" width="3.00" height="86.00" fill="#dbdbdb"/>
<g filter="url(#sh)"><rect x="167.9" y="273.9" width="723.6" height="150" rx="4" fill="#fafafa" stroke="#b4b8c0" stroke-width="0.8"/></g>
<rect x="169.20" y="302.60" width="721.00" height="120.00" fill="#f0f0f0"/>
<g clip-path="url(#cw3)">
<rect x="167.90" y="273.60" width="725.00" height="18.00" fill="#f3f3f3"/>
<rect x="167.90" y="291.60" width="725.00" height="10.90" fill="#fff"/>
<line x1="169.20" y1="302.60" x2="890.20" y2="302.60" stroke="#c4c4c4" stroke-width="0.8"/>
<rect x="169.30" y="303.20" width="45.20" height="14.80" fill="#f7f7f7" stroke="#dcdcdc" stroke-width="0.6"/>
<path d="M177.4,278.6 L182.2,286.2 H172.6 Z" fill="#fdc90f" stroke="#f4b400" stroke-width="0.5" stroke-linejoin="round"/><path d="M176.3,282.2 l2.6,1.5 l-2.6,1.5 z" fill="#fff"/>
<text transform="translate(185.30,285.24) matrix(0.8829 0.0005 0 1 0 0)" font-size="7.6" fill="#1a1a1a" text-anchor="start" stroke="#1a1a1a" stroke-width="0.12">Output variables - 3:1841 - Java Edit Variable (simple)</text>
<line x1="823.30" y1="282.60" x2="828.50" y2="282.60" stroke="#222" stroke-width="0.8"/>
<rect x="848.50" y="279.80" width="5.00" height="5.00" fill="none" stroke="#222" stroke-width="0.8" rx="0.8"/>
<path d="M874.5,279.7 l5.4,5.4 m0,-5.4 l-5.4,5.4" stroke="#222" stroke-width="0.8" fill="none"/>
<text transform="translate(171.60,300.22) matrix(0.8770 0.0005 0 1 0 0)" font-size="7.0" fill="#000" text-anchor="start" stroke="#000" stroke-width="0.12">File</text>
<line x1="171.60" y1="300.60" x2="174.60" y2="300.60" stroke="#111" stroke-width="0.5"/>
<text transform="translate(171.50,312.82) matrix(0.8659 0.0005 0 1 0 0)" font-size="7.0" fill="#000" text-anchor="start" stroke="#000" stroke-width="0.12">Flow Variables</text>
<rect x="169.70" y="318.50" width="718.90" height="78.05" fill="#fff"/>
<line x1="324.80" y1="318.50" x2="324.80" y2="332.50" stroke="#dcdcdc" stroke-width="1"/>
<line x1="491.20" y1="318.50" x2="491.20" y2="332.50" stroke="#dcdcdc" stroke-width="1"/>
<line x1="692.20" y1="318.50" x2="692.20" y2="332.50" stroke="#dcdcdc" stroke-width="1"/>
<line x1="169.70" y1="332.30" x2="888.60" y2="332.30" stroke="#e4e4e4" stroke-width="0.8"/>
<text transform="translate(172.30,329.12) matrix(0.8770 0.0005 0 1 0 0)" font-size="7.0" fill="#111" text-anchor="start" stroke="#111" stroke-width="0.12">Index</text>
<text transform="translate(328.00,329.12) matrix(0.8770 0.0005 0 1 0 0)" font-size="7.0" fill="#111" text-anchor="start" stroke="#111" stroke-width="0.12">Owner ID</text>
<text transform="translate(493.40,329.12) matrix(0.8770 0.0005 0 1 0 0)" font-size="7.0" fill="#111" text-anchor="start" stroke="#111" stroke-width="0.12">Name</text>
<text transform="translate(695.00,329.12) matrix(0.8770 0.0005 0 1 0 0)" font-size="7.0" fill="#111" text-anchor="start" stroke="#111" stroke-width="0.12">Value</text>
<text transform="translate(323.30,339.54) matrix(0.8770 0.0005 0 1 0 0)" font-size="7.0" fill="#111" text-anchor="end" stroke="#111" stroke-width="0.12">0</text>
<text transform="translate(325.60,339.54) matrix(0.8770 0.0005 0 1 0 0)" font-size="7.0" fill="#111" text-anchor="start" stroke="#111" stroke-width="0.12">3:1841</text>
<line x1="500.80" y1="332.52" x2="500.80" y2="340.92" stroke="#959595" stroke-width="0.9"/>
<line x1="492.10" y1="332.52" x2="492.10" y2="340.92" stroke="#a5a5a5" stroke-width="0.8"/>
<text transform="translate(493.80,339.40) matrix(0.9000 0.0005 0 1 0 0)" font-size="8.0" fill="#151515" text-anchor="start" stroke="#151515" stroke-width="0.2">s</text>
<circle cx="498.70" cy="334.42" r="1.1" fill="#ee1c25"/>
<text transform="translate(502.90,339.54) matrix(0.8677 0.0005 0 1 0 0)" font-size="7.0" fill="#111" text-anchor="start" stroke="#111" stroke-width="0.12">new variable</text>
<text transform="translate(692.80,339.54) matrix(0.8770 0.0005 0 1 0 0)" font-size="7.0" fill="#111" text-anchor="start" stroke="#111" stroke-width="0.12">true</text>
<line x1="169.70" y1="341.55" x2="888.60" y2="341.55" stroke="#a6a6a6" stroke-width="1.2"/>
<rect x="501.00" y="341.95" width="190.80" height="8.25" fill="#0078d7"/>
<text transform="translate(323.30,348.69) matrix(0.8770 0.0005 0 1 0 0)" font-size="7.0" fill="#111" text-anchor="end" stroke="#111" stroke-width="0.12">0</text>
<text transform="translate(325.60,348.69) matrix(0.8770 0.0005 0 1 0 0)" font-size="7.0" fill="#111" text-anchor="start" stroke="#111" stroke-width="0.12">3:1840</text>
<line x1="500.80" y1="341.67" x2="500.80" y2="350.07" stroke="#959595" stroke-width="0.9"/>
<line x1="492.10" y1="341.67" x2="492.10" y2="350.07" stroke="#a5a5a5" stroke-width="0.8"/>
<rect x="495.00" y="343.57" width="0.95" height="4.60" fill="#1a1a1a"/>
<circle cx="498.70" cy="343.57" r="1.1" fill="#ee1c25"/>
<text transform="translate(502.90,348.69) matrix(0.8294 0.0005 0 1 0 0)" font-size="7.0" fill="#fff" text-anchor="start" stroke="#fff" stroke-width="0.12">Items Size</text>
<text transform="translate(692.80,348.69) matrix(0.8770 0.0005 0 1 0 0)" font-size="7.0" fill="#111" text-anchor="start" stroke="#111" stroke-width="0.12">1000</text>
<line x1="169.70" y1="350.70" x2="888.60" y2="350.70" stroke="#a6a6a6" stroke-width="1.2"/>
<text transform="translate(323.30,357.84) matrix(0.8770 0.0005 0 1 0 0)" font-size="7.0" fill="#111" text-anchor="end" stroke="#111" stroke-width="0.12">0</text>
<text transform="translate(325.60,357.84) matrix(0.8770 0.0005 0 1 0 0)" font-size="7.0" fill="#111" text-anchor="start" stroke="#111" stroke-width="0.12">3:1840</text>
<line x1="500.80" y1="350.82" x2="500.80" y2="359.22" stroke="#959595" stroke-width="0.9"/>
<line x1="492.10" y1="350.82" x2="492.10" y2="359.22" stroke="#a5a5a5" stroke-width="0.8"/>
<text transform="translate(493.80,357.70) matrix(0.9000 0.0005 0 1 0 0)" font-size="8.0" fill="#151515" text-anchor="start" stroke="#151515" stroke-width="0.2">s</text>
<circle cx="498.70" cy="352.72" r="1.1" fill="#ee1c25"/>
<text transform="translate(502.90,357.84) matrix(0.8570 0.0005 0 1 0 0)" font-size="7.0" fill="#111" text-anchor="start" stroke="#111" stroke-width="0.12">RowID</text>
<text transform="translate(692.80,357.84) matrix(0.8770 0.0005 0 1 0 0)" font-size="7.0" fill="#111" text-anchor="start" stroke="#111" stroke-width="0.12">Row0</text>
<line x1="169.70" y1="359.85" x2="888.60" y2="359.85" stroke="#a6a6a6" stroke-width="1.2"/>
<text transform="translate(323.30,366.99) matrix(0.8770 0.0005 0 1 0 0)" font-size="7.0" fill="#111" text-anchor="end" stroke="#111" stroke-width="0.12">0</text>
<text transform="translate(325.60,366.99) matrix(0.8770 0.0005 0 1 0 0)" font-size="7.0" fill="#111" text-anchor="start" stroke="#111" stroke-width="0.12">3:1828</text>
<line x1="500.80" y1="359.97" x2="500.80" y2="368.37" stroke="#959595" stroke-width="0.9"/>
<line x1="492.10" y1="359.97" x2="492.10" y2="368.37" stroke="#a5a5a5" stroke-width="0.8"/>
<rect x="495.00" y="361.87" width="0.95" height="4.60" fill="#1a1a1a"/>
<circle cx="498.70" cy="361.87" r="1.1" fill="#ee1c25"/>
<text transform="translate(502.90,366.99) matrix(0.9262 0.0005 0 1 0 0)" font-size="7.0" fill="#111" text-anchor="start" stroke="#111" stroke-width="0.12">currentIteration</text>
<text transform="translate(692.80,366.99) matrix(0.8770 0.0005 0 1 0 0)" font-size="7.0" fill="#111" text-anchor="start" stroke="#111" stroke-width="0.12">0</text>
<line x1="169.70" y1="369.00" x2="888.60" y2="369.00" stroke="#a6a6a6" stroke-width="1.2"/>
<text transform="translate(323.30,376.14) matrix(0.8770 0.0005 0 1 0 0)" font-size="7.0" fill="#111" text-anchor="end" stroke="#111" stroke-width="0.12">0</text>
<text transform="translate(325.60,376.14) matrix(0.8770 0.0005 0 1 0 0)" font-size="7.0" fill="#111" text-anchor="start" stroke="#111" stroke-width="0.12">3:1828</text>
<line x1="500.80" y1="369.12" x2="500.80" y2="377.52" stroke="#959595" stroke-width="0.9"/>
<line x1="492.10" y1="369.12" x2="492.10" y2="377.52" stroke="#a5a5a5" stroke-width="0.8"/>
<rect x="495.00" y="371.02" width="0.95" height="4.60" fill="#1a1a1a"/>
<circle cx="498.70" cy="371.02" r="1.1" fill="#ee1c25"/>
<text transform="translate(502.90,376.14) matrix(0.8612 0.0005 0 1 0 0)" font-size="7.0" fill="#111" text-anchor="start" stroke="#111" stroke-width="0.12">Loop-Execute</text>
<text transform="translate(692.80,376.14) matrix(1.0000 0.0005 0 1 0 0)" font-size="7.0" fill="#111" text-anchor="start" stroke="#111" stroke-width="0.12"></text>
<line x1="169.70" y1="378.15" x2="888.60" y2="378.15" stroke="#a6a6a6" stroke-width="1.2"/>
<text transform="translate(323.30,385.29) matrix(0.8770 0.0005 0 1 0 0)" font-size="7.0" fill="#111" text-anchor="end" stroke="#111" stroke-width="0.12">0</text>
<text transform="translate(325.60,385.29) matrix(0.8770 0.0005 0 1 0 0)" font-size="7.0" fill="#111" text-anchor="start" stroke="#111" stroke-width="0.12">3:1828</text>
<line x1="500.80" y1="378.27" x2="500.80" y2="386.67" stroke="#959595" stroke-width="0.9"/>
<line x1="492.10" y1="378.27" x2="492.10" y2="386.67" stroke="#a5a5a5" stroke-width="0.8"/>
<rect x="495.00" y="380.17" width="0.95" height="4.60" fill="#1a1a1a"/>
<circle cx="498.70" cy="380.17" r="1.1" fill="#ee1c25"/>
<text transform="translate(502.90,385.29) matrix(0.8823 0.0005 0 1 0 0)" font-size="7.0" fill="#111" text-anchor="start" stroke="#111" stroke-width="0.12">Loop (0)</text>
<text transform="translate(692.80,385.29) matrix(1.0000 0.0005 0 1 0 0)" font-size="7.0" fill="#111" text-anchor="start" stroke="#111" stroke-width="0.12"></text>
<line x1="169.70" y1="387.30" x2="888.60" y2="387.30" stroke="#a6a6a6" stroke-width="1.2"/>
<text transform="translate(323.30,394.44) matrix(0.8770 0.0005 0 1 0 0)" font-size="7.0" fill="#111" text-anchor="end" stroke="#111" stroke-width="0.12">0</text>
<text transform="translate(325.60,394.44) matrix(1.0000 0.0005 0 1 0 0)" font-size="7.0" fill="#111" text-anchor="start" stroke="#111" stroke-width="0.12"></text>
<line x1="500.80" y1="387.42" x2="500.80" y2="395.82" stroke="#959595" stroke-width="0.9"/>
<line x1="492.10" y1="387.42" x2="492.10" y2="395.82" stroke="#a5a5a5" stroke-width="0.8"/>
<text transform="translate(493.80,394.30) matrix(0.9000 0.0005 0 1 0 0)" font-size="8.0" fill="#151515" text-anchor="start" stroke="#151515" stroke-width="0.2">s</text>
<circle cx="498.70" cy="389.32" r="1.1" fill="#ee1c25"/>
<text transform="translate(502.90,394.44) matrix(0.8581 0.0005 0 1 0 0)" font-size="7.0" fill="#111" text-anchor="start" stroke="#111" stroke-width="0.12">knime.workspace</text>
<text transform="translate(692.80,394.44) matrix(0.8566 0.0005 0 1 0 0)" font-size="7.0" fill="#111" text-anchor="start" stroke="#111" stroke-width="0.12">E:\Knime-Workspace</text>
<line x1="169.70" y1="396.45" x2="888.60" y2="396.45" stroke="#a6a6a6" stroke-width="1.2"/>
<line x1="324.80" y1="332.50" x2="324.80" y2="396.55" stroke="#9a9a9a" stroke-width="1.0"/>
<line x1="491.20" y1="332.50" x2="491.20" y2="396.55" stroke="#9a9a9a" stroke-width="1.0"/>
<line x1="692.20" y1="332.50" x2="692.20" y2="396.55" stroke="#9a9a9a" stroke-width="1.0"/>
<line x1="888.30" y1="332.50" x2="888.30" y2="396.55" stroke="#a6a6a6" stroke-width="1.2"/>
<line x1="170.00" y1="318.50" x2="170.00" y2="396.55" stroke="#7d7d7d" stroke-width="0.9"/>
<line x1="169.70" y1="318.50" x2="888.60" y2="318.50" stroke="#8f95a3" stroke-width="1.1"/>
<line x1="888.40" y1="318.50" x2="888.40" y2="332.50" stroke="#8f95a3" stroke-width="1.0"/>
</g>
</svg></body></html>
